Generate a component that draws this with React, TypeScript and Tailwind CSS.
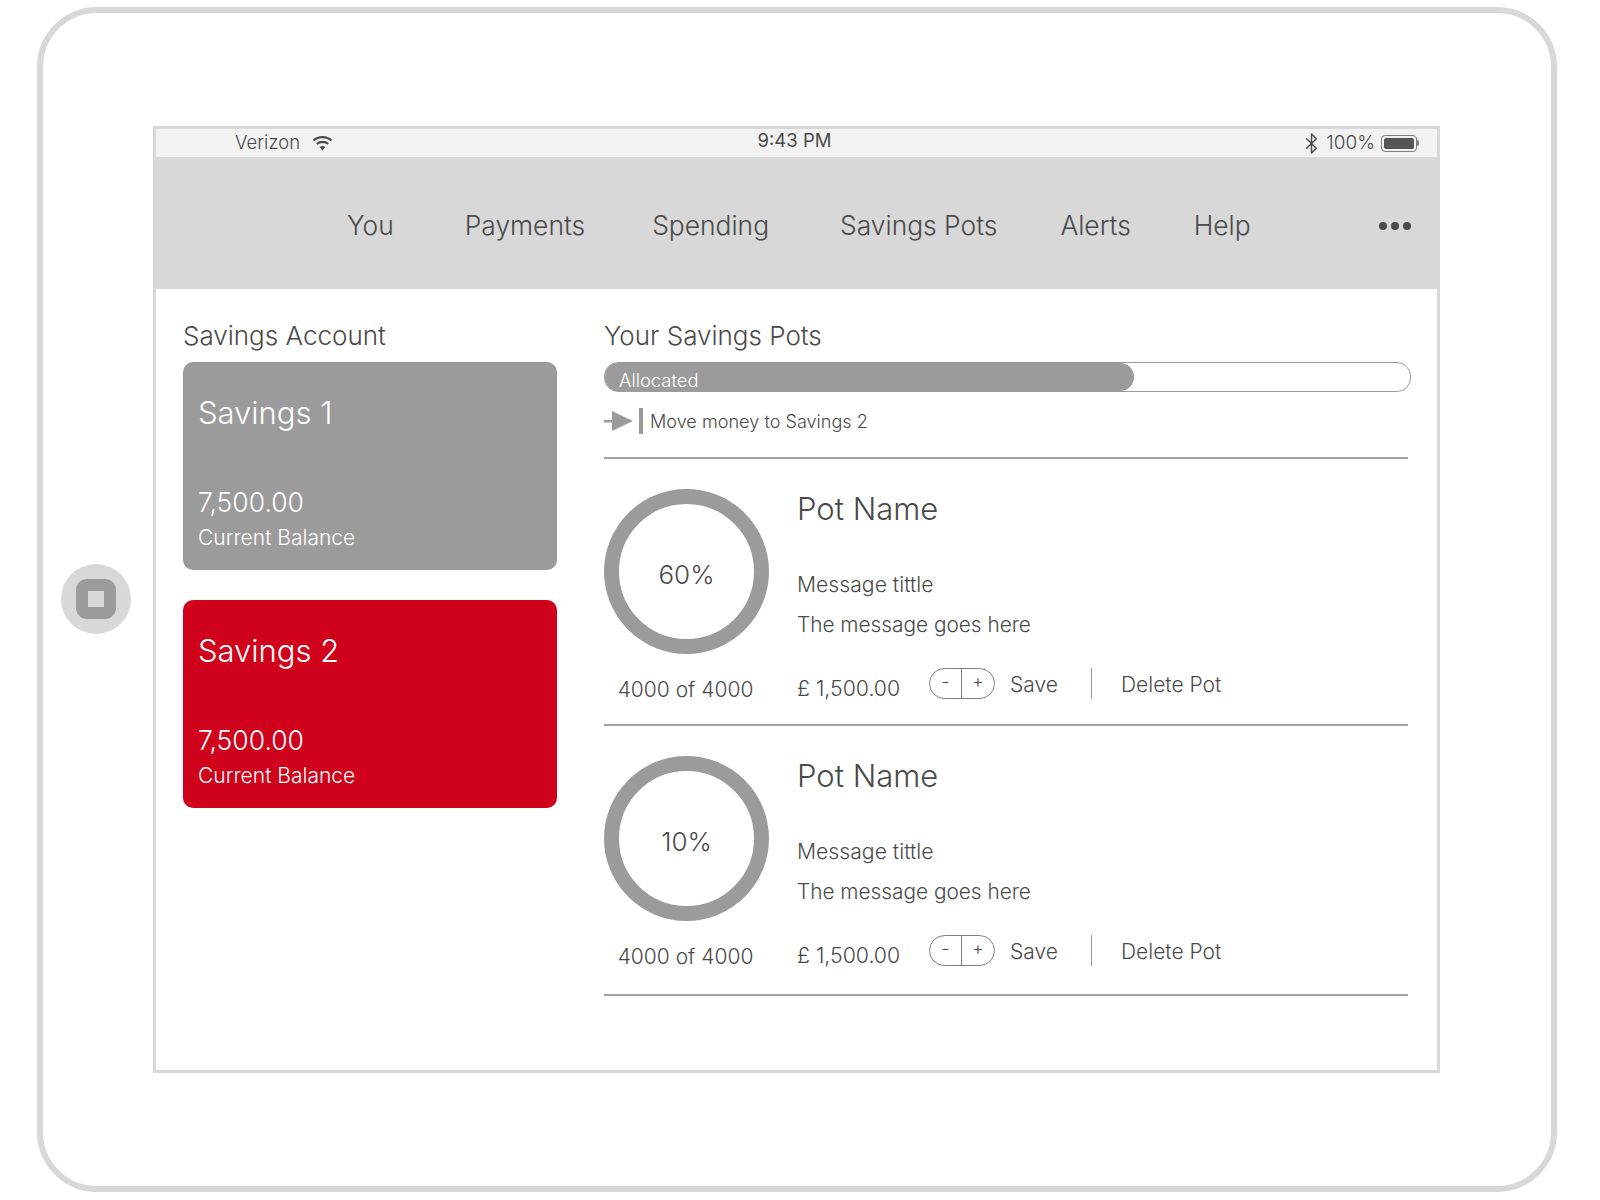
import { Bluetooth } from "lucide-react";

const navItems = [
  { label: "You", className: "ml-[191px]" },
  { label: "Payments", className: "ml-[71px]" },
  { label: "Spending", className: "ml-[67px]" },
  { label: "Savings Pots", className: "ml-[71px]" },
  { label: "Alerts", className: "ml-[63px]" },
  { label: "Help", className: "ml-[63px]" },
];

const accounts = [
  { name: "Savings 1", color: "bg-[#9b9b9b]" },
  { name: "Savings 2", color: "bg-[#d0021b]" },
];

const pots = [
  { percent: "60%", extra: "h-[267px]" },
  { percent: "10%", extra: "h-[270px]" },
];

const WifiIcon = () => (
  <svg width="21" height="16" viewBox="0 0 21 16" fill="none" stroke="#4a4a4a" strokeWidth="2.2">
    <path d="M1.5 5.5 C6.5 1 14.5 1 19.5 5.5" />
    <path d="M4.8 9 C8 6.2 13 6.2 16.2 9" />
    <path d="M10.5 15.5 L7.6 12 C9.3 10.8 11.7 10.8 13.4 12 Z" fill="#4a4a4a" stroke="none" />
  </svg>
);

const ArrowIcon = () => (
  <svg width="30" height="20" viewBox="0 0 30 20">
    <rect x="0" y="9" width="10" height="2.5" fill="#9b9b9b" />
    <path d="M8 0 L29 10 L8 20 Z" fill="#9b9b9b" />
  </svg>
);

const Pot = ({ percent, extra }: { percent: string; extra: string }) => (
  <div className={`flex border-b-2 border-[#a3a3a3] pt-[30px] ${extra}`}>
    <div className="w-[165px] flex flex-col items-center">
      <div className="w-[165px] h-[165px] rounded-full border-[15px] border-[#9b9b9b] flex items-center justify-center pt-[6px] text-[26px] text-[#4a4a4a]">
        {percent}
      </div>
      <div className="mt-[22px] text-[21px] leading-[28px] text-[#4a4a4a] whitespace-nowrap -translate-x-[1px]">4000 of 4000</div>
    </div>
    <div className="ml-[28px] flex flex-col text-[#4a4a4a]">
      <div className="text-[31px] leading-[40px]">Pot Name</div>
      <div className="mt-[41px] text-[21.2px] leading-[28px]">Message tittle</div>
      <div className="mt-[13px] text-[20.8px] leading-[28px]">The message goes here</div>
      <div className="mt-[29px] flex items-center h-[31px] text-[21px]">
        <div className="w-[132px] pt-[11px] text-[21.3px]">£ 1,500.00</div>
        <div className="flex w-[66px] h-[31px] rounded-full border border-[#7f7f7f] text-[18px] leading-[25px]">
          <div className="w-[32px] text-center border-r border-[#7f7f7f]">-</div>
          <div className="flex-1 text-center">+</div>
        </div>
        <div className="ml-[15px] w-[81px] pt-[2px]">Save</div>
        <div className="w-px h-[31px] bg-[#9b9b9b]" />
        <div className="ml-[29px] pt-[2px]">Delete Pot</div>
      </div>
    </div>
  </div>
);

const App = () => {
  return (
    <div className="w-[1600px] h-[1200px] bg-white pt-[7px] pl-[37px] font-['Inter',sans-serif] font-light overflow-hidden">
      <div className="w-[1520px] h-[1185px] border-[6px] border-[#d8d8d8] rounded-[60px] flex pl-[18px] pt-[113px] gap-[22px]">
        <div className="mt-[438px] w-[70px] h-[70px] rounded-full bg-[#d8d8d8] flex items-center justify-center">
          <div className="w-[40px] h-[40px] rounded-[11px] bg-[#9b9b9b] flex items-center justify-center">
            <div className="w-[16px] h-[16px] bg-[#d8d8d8]" />
          </div>
        </div>

        <div className="w-[1287px] h-[947px] border-[3px] border-[#d8d8d8] flex flex-col">
          <div className="h-[28px] bg-[#f2f2f2] grid grid-cols-3 items-center text-[#4a4a4a] text-[18.5px]">
            <div className="pl-[79px] flex items-center gap-[12px]">
              <span>Verizon</span>
              <WifiIcon />
            </div>
            <div className="text-center font-normal -translate-x-[2px] -translate-y-[2px]">9:43 PM</div>
            <div className="pr-[18px] flex items-center justify-end">
              <Bluetooth size={23} strokeWidth={1.5} className="mr-[3px]" />
              <span className="text-[19px]">100%</span>
              <div className="ml-[6px] w-[36px] h-[17px] border border-[#7f7f7f] rounded-[4px] p-[2px]">
                <div className="w-full h-full bg-[#555555] rounded-[2px]" />
              </div>
              <div className="w-[2px] h-[6px] bg-[#7f7f7f] rounded-r-[2px]" />
            </div>
          </div>

          <div className="h-[132px] bg-[#d8d8d8] flex items-center pt-[6px] text-[#4a4a4a] text-[26.4px]">
            {navItems.map((item) => (
              <span key={item.label} className={item.className}>
                {item.label}
              </span>
            ))}
            <div className="ml-auto mr-[26px] flex gap-[4px]">
              <div className="w-[8px] h-[8px] rounded-full bg-[#4a4a4a]" />
              <div className="w-[8px] h-[8px] rounded-full bg-[#4a4a4a]" />
              <div className="w-[8px] h-[8px] rounded-full bg-[#4a4a4a]" />
            </div>
          </div>

          <div className="flex pl-[27px] pt-[28px]">
            <div className="w-[374px]">
              <h2 className="text-[26px] leading-[38px] text-[#4a4a4a] mb-[7px]">Savings Account</h2>
              <div className="flex flex-col gap-[30px]">
                {accounts.map((account) => (
                  <div
                    key={account.name}
                    className={`h-[208px] rounded-[10px] px-[15px] pt-[31px] text-white ${account.color}`}
                  >
                    <div className="text-[31px] leading-[40px]">{account.name}</div>
                    <div className="mt-[52px] text-[26.5px] leading-[34px]">7,500.00</div>
                    <div className="mt-[6px] text-[21px] leading-[26px]">Current Balance</div>
                  </div>
                ))}
              </div>
            </div>

            <div className="ml-[47px] w-[807px]">
              <h2 className="text-[26px] leading-[38px] text-[#4a4a4a] mb-[7px]">Your Savings Pots</h2>
              <div className="h-[30px] rounded-[14px] border border-[#9b9b9b] overflow-hidden">
                <div className="w-[529px] h-full bg-[#9b9b9b] rounded-r-[14px] pl-[14px] pt-[3px] text-white text-[18.4px] leading-[28px]">
                  Allocated
                </div>
              </div>
              <div className="mt-[16px] h-[26px] flex items-center">
                <ArrowIcon />
                <div className="ml-[5px] w-[4px] h-[26px] bg-[#9b9b9b]" />
                <span className="ml-[7px] pt-[2px] text-[18.1px] text-[#4a4a4a]">Move money to Savings 2</span>
              </div>
              <div className="w-[804px]">
                <div className="mt-[23px] h-[2px] bg-[#a3a3a3]" />
                {pots.map((pot) => (
                  <Pot key={pot.percent} percent={pot.percent} extra={pot.extra} />
                ))}
              </div>
            </div>
          </div>
        </div>
      </div>
    </div>
  );
};

export default App;
